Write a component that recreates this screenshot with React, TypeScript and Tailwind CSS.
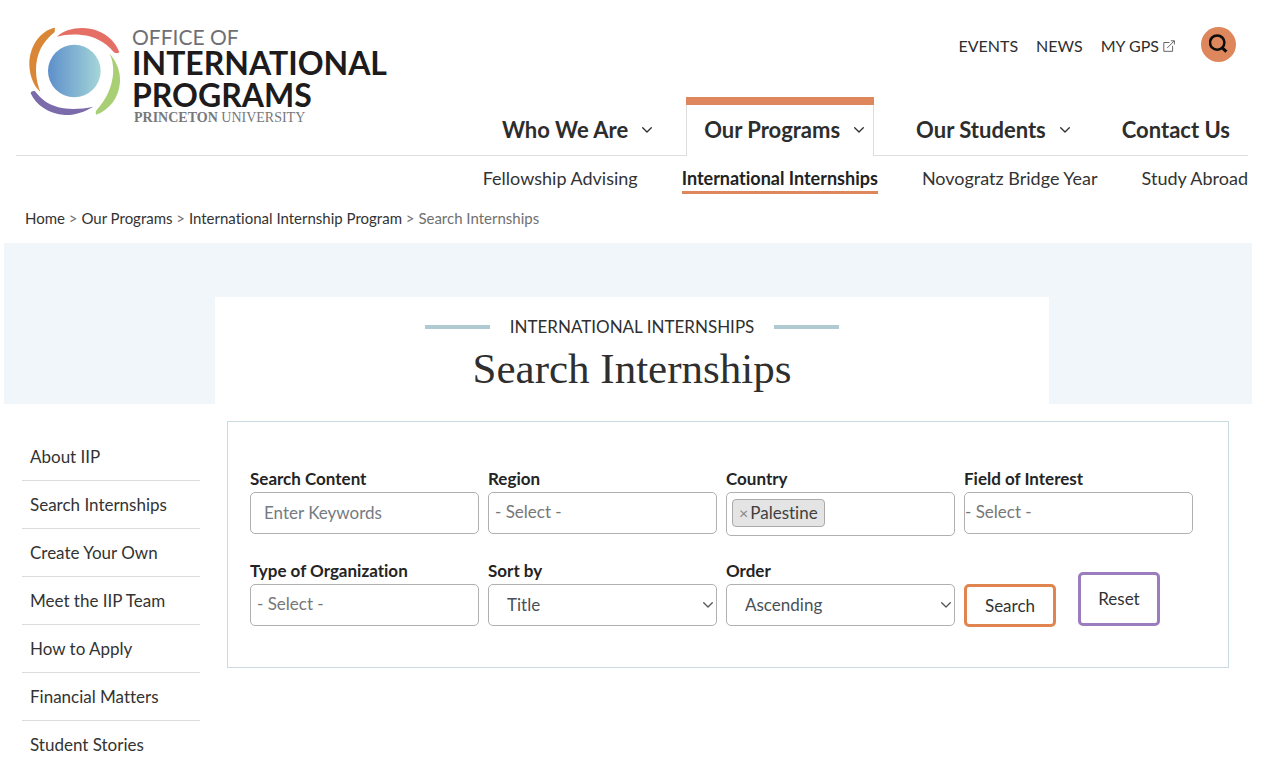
import { useState } from "react";

const utilityLinks = ["Events", "News"];

const mainNav = [
  { label: "Who We Are", menu: true },
  { label: "Our Programs", menu: true, active: true },
  { label: "Our Students", menu: true },
  { label: "Contact Us", menu: false },
];

const subNav = [
  { label: "Fellowship Advising" },
  { label: "International Internships", active: true },
  { label: "Novogratz Bridge Year" },
  { label: "Study Abroad" },
];

const breadcrumbs = ["Home", "Our Programs", "International Internship Program"];

const sideNav = [
  "About IIP",
  "Search Internships",
  "Create Your Own",
  "Meet the IIP Team",
  "How to Apply",
  "Financial Matters",
  "Student Stories",
];

const fieldBox = "w-full h-[42px] rounded-[5px] border border-[#b0b0b0] bg-white text-[17px]";

function Chevron({ className }: { className?: string }) {
  return (
    <svg viewBox="0 0 10 6" className={className} fill="none" stroke="currentColor" strokeWidth="1.3" strokeLinecap="round" strokeLinejoin="round" aria-hidden="true">
      <path d="M0.7 0.7 L5 5 L9.3 0.7" />
    </svg>
  );
}

function Logo() {
  return (
    <a href="#" className="flex items-start pl-3 pt-[26px]">
      <svg viewBox="54 48 288 279" className="w-24 h-[93px] shrink-0" aria-hidden="true">
        <defs>
          <linearGradient id="globe" x1="0" x2="1" y1="0" y2="0">
            <stop offset="0" stopColor="#5d8fcb" />
            <stop offset="1" stopColor="#a4d6d8" />
          </linearGradient>
        </defs>
        <circle cx="193" cy="183" r="79" fill="url(#globe)" />
        <path fill="#d98637" d="M135 53 C95 60 57 105 58 165 C59 200 72 228 91 246 C83 225 78 205 78 180 C78 130 98 95 134 66 Z" />
        <path fill="#e56f65" d="M141 80 C170 52 225 48 262 62 C295 75 318 98 328 127 C322 131 315 130 311 126 C285 95 250 78 215 75 C188 72 165 74 141 80 Z" />
        <path fill="#a9cf74" d="M298 130 C320 155 332 185 330 215 C327 262 300 298 259 314 C256 310 257 304 260 300 C295 262 305 225 309 195 C311 170 308 150 298 130 Z" />
        <path fill="#7b6bab" d="M250 290 C222 306 195 316 165 315 C115 312 78 285 62 250 C63 244 70 242 75 244 C95 270 115 283 145 292 C180 300 215 297 250 290 Z" />
      </svg>
      <span className="flex flex-col pl-2">
        <span className="text-[21px] leading-[21px] text-[#6f7074]">OFFICE OF</span>
        <span className="text-[32px] leading-8 font-bold text-[#1d1b1c]">INTERNATIONAL</span>
        <span className="text-[32px] leading-8 font-bold text-[#1d1b1c]">PROGRAMS</span>
        <span className="pl-[2px] text-sm leading-[14px] text-[#77787b] font-['Liberation_Serif',serif]">
          <b>PRINCETON</b> UNIVERSITY
        </span>
      </span>
    </a>
  );
}

function Header() {
  return (
    <header className="pl-3 pr-1">
      <div className="flex justify-between items-stretch border-b border-[#dedede]">
        <Logo />
        <div className="flex flex-col items-end">
          <div className="flex items-center h-[97px] pb-[5px] pr-3 gap-[18px] text-base uppercase text-[#2e2e2e]">
            {utilityLinks.map(link => (
              <a key={link} href="#">{link}</a>
            ))}
            <a href="#" className="flex items-center gap-1">
              My GPS
              <svg viewBox="0 0 12 12" className="w-3 h-3" fill="none" stroke="#555" strokeWidth="0.9" aria-hidden="true">
                <path d="M6.5 2.5 H0.8 V11.3 H9.6 V5.8 M4.2 8 L11.2 0.9 M7.8 0.8 H11.4 V4.4" />
              </svg>
            </a>
            <button type="button" aria-label="Search" className="flex items-center justify-center ml-2 mb-1 w-[35px] h-[35px] rounded-full bg-[#de875c]">
              <svg viewBox="1 1 20 20" className="w-5 h-5" fill="none" stroke="#0d0d0d" strokeWidth="2.5" aria-hidden="true">
                <circle cx="9.2" cy="9.6" r="7.2" />
                <path d="M13.6 14.4 L18.4 18.6" strokeWidth="3.2" />
              </svg>
            </button>
          </div>

          <nav aria-label="Main" className="flex gap-6 text-[22px] font-bold text-[#2d2d2d]">
            {mainNav.map(item => (
              <a
                key={item.label}
                href="#"
                className={`flex items-center h-[59px] -mb-px pb-[2px] pl-[18px] border-t-8 ${
                  item.active ? "border-t-[#de875c] bg-white shadow-[inset_1px_0_#dedede,inset_-1px_0_#dedede]" : "border-t-transparent"
                } ${item.menu ? "pr-[10px]" : "pr-[18px]"}`}
              >
                {item.label}
                {item.menu && <Chevron className="ml-[14px] w-[10px] h-[6px]" />}
              </a>
            ))}
          </nav>
        </div>
      </div>

      <nav aria-label="Our Programs" className="flex justify-end gap-11 pt-[10px] text-lg leading-6 text-[#333]">
        {subNav.map(item => (
          <a key={item.label} href="#" className={item.active ? "pb-[1px] border-b-[3px] border-[#de875c] font-bold text-[#222]" : "pb-1"}>
            {item.label}
          </a>
        ))}
      </nav>
    </header>
  );
}

function PageTitle() {
  return (
    <div className="mt-[15px] pt-[54px] pl-[211px] pr-[203px] bg-[#f1f6fb]">
      <div className="pt-[18px] pb-[11px] bg-white text-center text-[#2f2f2f]">
        <p className="flex items-center justify-center gap-5 leading-6 uppercase">
          <span className="w-[65px] h-1 bg-[#b0cad2]" />
          International Internships
          <span className="w-[65px] h-1 bg-[#b0cad2]" />
        </p>
        <h1 className="pt-[6px] text-[43px] leading-[48px] font-['Liberation_Serif',serif]">Search Internships</h1>
      </div>
    </div>
  );
}

function Field({ id, label, children }: { id: string; label: string; children: React.ReactNode }) {
  return (
    <div className="flex flex-col">
      <label htmlFor={id} className="h-[25px] leading-6 font-bold text-[#242424]">{label}</label>
      {children}
    </div>
  );
}

function SearchForm() {
  const [country, setCountry] = useState<string | null>("Palestine");

  return (
    <form
      onSubmit={e => e.preventDefault()}
      className="flex-1 pt-[45px] pb-10 pl-[22px] pr-[35px] border border-[#c9dbe0]"
    >
      <div className="grid grid-cols-4 gap-x-[9px] gap-y-[23px]">
        <Field id="keywords" label="Search Content">
          <input id="keywords" type="text" placeholder="Enter Keywords" className={`${fieldBox} px-[13px] pb-[2px] placeholder:text-[#757b82]`} />
        </Field>
        <Field id="region" label="Region">
          <input id="region" type="text" placeholder="- Select -" className={`${fieldBox} px-[6px] pb-[3px] placeholder:text-[#777]`} />
        </Field>
        <Field id="country" label="Country">
          <div className="flex items-center h-11 px-[5px] pb-[2px] rounded-[5px] border border-[#b0b0b0]">
            {country && (
              <span className="flex items-center h-7 px-[6px] gap-[2px] rounded border border-[#aaa] bg-[#e4e4e4] text-[#3f3f3f]">
                <button type="button" aria-label={`Remove ${country}`} onClick={() => setCountry(null)} className="text-base text-[#888]">×</button>
                {country}
              </span>
            )}
            <input id="country" type="text" className="flex-1 min-w-0 h-full outline-none" />
          </div>
        </Field>
        <Field id="interest" label="Field of Interest">
          <input id="interest" type="text" placeholder="- Select -" className={`${fieldBox} pb-[3px] placeholder:text-[#777]`} />
        </Field>

        <Field id="organization" label="Type of Organization">
          <input id="organization" type="text" placeholder="- Select -" className={`${fieldBox} px-[6px] pb-[3px] placeholder:text-[#777]`} />
        </Field>
        <Field id="sort" label="Sort by">
          <div className="relative">
            <select id="sort" className={`${fieldBox} appearance-none px-[18px] text-[#495057]`}>
              <option>Title</option>
            </select>
            <Chevron className="absolute right-1 top-[18px] w-[10px] h-[6px] text-[#555] pointer-events-none" />
          </div>
        </Field>
        <Field id="order" label="Order">
          <div className="relative">
            <select id="order" className={`${fieldBox} appearance-none px-[18px] text-[#495057]`}>
              <option>Ascending</option>
              <option>Descending</option>
            </select>
            <Chevron className="absolute right-1 top-[18px] w-[10px] h-[6px] text-[#555] pointer-events-none" />
          </div>
        </Field>
        <div className="flex items-start gap-[22px] text-[#333]">
          <button type="submit" className="w-[92px] h-[43px] mt-[25px] rounded-[5px] border-[3px] border-[#e08550]">Search</button>
          <button type="reset" className="w-[82px] h-[54px] mt-[13px] rounded-[5px] border-[3px] border-[#9b7dbf]">Reset</button>
        </div>
      </div>
    </form>
  );
}

export default function App() {
  return (
    <div className="pl-1 pr-8 bg-white text-[17px] font-['Lato',sans-serif] [font-variant-ligatures:none]">
      <Header />

      <nav aria-label="Breadcrumb" className="mt-[14px] pl-[21px] text-[15px] leading-5 text-[#707070]">
        {breadcrumbs.map(crumb => (
          <span key={crumb}>
            <a href="#" className="text-[#333]">{crumb}</a>{" > "}
          </span>
        ))}
        <span>Search Internships</span>
      </nav>

      <PageTitle />

      <div className="flex items-start gap-[27px] mt-[17px] pl-[18px] pr-[23px]">
        <nav aria-label="International Internships" className="w-[178px] shrink-0 pt-3">
          <ul className="divide-y divide-[#dcdcdc]">
            {sideNav.map(item => (
              <li key={item}>
                <a href="#" className="flex items-center h-[47px] pl-2 text-[#333]">{item}</a>
              </li>
            ))}
          </ul>
        </nav>
        <SearchForm />
      </div>
    </div>
  );
}
